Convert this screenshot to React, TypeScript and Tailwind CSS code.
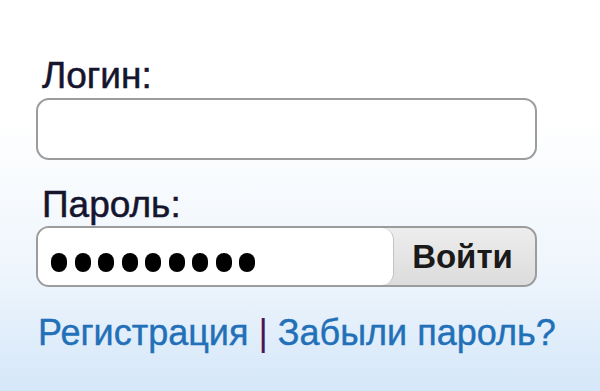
import React from 'react';

const font = "font-['Liberation_Sans',Arial,sans-serif]";

export default function App() {
  return (
    <div className={`min-h-[391px] w-[600px] bg-linear-to-b from-white from-30% via-[#eef5fc] via-70% to-[#d5e7f9] pl-[36px] pt-[57px] ${font}`}>
      {/* Логин */}
      <label htmlFor="login" className="block pl-[6px] text-[37px] leading-none text-[#15152e] [-webkit-text-stroke:0.5px_#15152e]">
        Логин:
      </label>
      <input
        id="login"
        type="text"
        className="mt-[4px] block h-[62px] w-[501px] rounded-[13px] border-2 border-[#9c9c9c] bg-white outline-none"
      />

      {/* Пароль */}
      <label className="mt-[26px] block pl-[6px] text-[37px] leading-none text-[#15152e] [-webkit-text-stroke:0.5px_#15152e]">
        Пароль:
      </label>
      <div className="mt-[3px] flex h-[61px] w-[501px] overflow-hidden rounded-[13px] border-2 border-[#9c9c9c] bg-linear-to-b from-[#ededed] to-[#dcdcdc]">
        <div className="flex w-[356px] items-start gap-[7.5px] rounded-r-[12px] border-r border-[#c2c2c2] bg-white pl-[13px] pt-[25px]">
          {Array.from({ length: 9 }).map((_, i) => (
            <span key={i} className="block h-[19px] w-[16px] rounded-full bg-black" />
          ))}
        </div>
        <button className="flex-1 pr-[4px] text-[33px] font-bold leading-none text-[#1a1a1a]">Войти</button>
      </div>

      {/* Ссылки */}
      <div className="mt-[28px] pl-[2px] text-[36px] leading-none text-[#2270b8] [-webkit-text-stroke:0.4px_#2270b8]">
        <a href="#">Регистрация</a>
        <span className="text-[#4b1552] [-webkit-text-stroke:0px]"> | </span>
        <a href="#">Забыли пароль?</a>
      </div>
    </div>
  );
}
